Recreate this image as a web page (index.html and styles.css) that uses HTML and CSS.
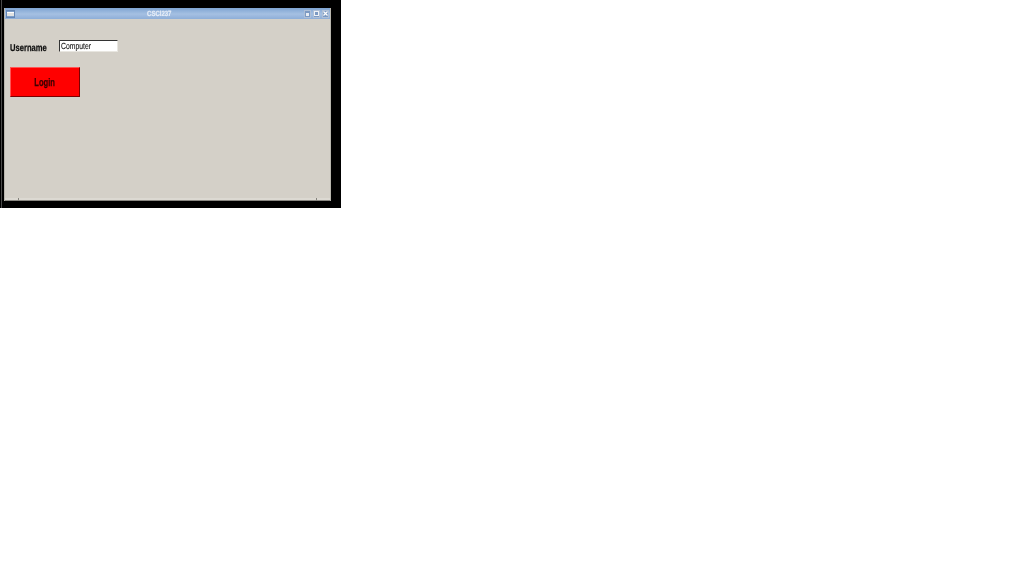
FILE: index.html
```html
<!DOCTYPE html>
<html lang="en">
<head>
<meta charset="utf-8">
<title>CSCI237</title>
<link rel="stylesheet" href="styles.css">
</head>
<body>
<div class="screen">
  <div class="window">
    <div class="titlebar">
      <button class="menu-btn" aria-label="Window menu"><span class="menu-glyph"></span></button>
      <span class="title">CSCI237</span>
      <div class="controls">
        <button class="ctl" aria-label="Minimize"><span class="glyph-min"></span></button>
        <button class="ctl" aria-label="Maximize"><span class="glyph-max"></span></button>
        <button class="ctl" aria-label="Close">
          <svg class="glyph-close" viewBox="0 0 5 5"><path d="M0.5 0.5L4.5 4.5M4.5 0.5L0.5 4.5" stroke="#fff" stroke-width="1.2" fill="none"/></svg>
        </button>
      </div>
    </div>
    <div class="content">
      <div class="form-row">
        <span class="label"><span class="squeeze squeeze-bold">Username</span></span>
        <div class="field" role="textbox"><span class="squeeze">Computer</span></div>
      </div>
      <button class="login"><span class="squeeze squeeze-bold squeeze-center">Login</span></button>
    </div>
    <div class="resize">
      <span class="grip"></span>
      <span class="grip"></span>
    </div>
  </div>
</div>
</body>
</html>
```
FILE: styles.css
```css
* { box-sizing: border-box; }
html, body { margin: 0; padding: 0; background: #fff; }
body { font-family: "Liberation Sans", Arial, sans-serif; text-rendering: geometricPrecision; }

.screen {
  width: 341px;
  height: 208px;
  background: #000;
  padding: 8px 10px 7px 4px;
  box-shadow: inset 1px 0 0 #000, inset 2px 0 0 #4a4a4a;
  filter: blur(0.35px);
}
.window {
  width: 327px;
  height: 193px;
  display: flex;
  flex-direction: column;
  background: #d4d0c8;
  border-left: 1px solid #b9b6ae;
  border-right: 1px solid #b9b6ae;
}
.titlebar {
  height: 11px;
  flex: none;
  display: flex;
  align-items: center;
  justify-content: space-between;
  padding: 0 1px;
  background: linear-gradient(#7fa5d3, #a5c0e2 55%, #8eaed8);
}
.menu-btn, .ctl {
  padding: 0;
  border: 0;
  display: flex;
  align-items: center;
  justify-content: center;
}
.menu-btn {
  width: 9px;
  height: 8px;
  background: #7d9ec9;
  border: 1px solid #6486b5;
}
.menu-glyph {
  display: block;
  width: 7px;
  height: 4px;
  background: #e0e2e2;
  border-top: 1px solid #fff;
}
.title {
  font-size: 7.5px;
  font-weight: 700;
  line-height: 11px;
  color: #e6edf7;
  margin-left: -1px;
  transform: scaleX(0.8);
  -webkit-text-stroke: 0.2px #e6edf7;
}
.controls { display: flex; gap: 2px; }
.ctl {
  width: 7px;
  height: 8px;
  background: #7c9ac3;
  border: 1px solid #aebfd6;
}
.glyph-min { display: block; width: 3px; height: 3px; margin-top: 2px; background: #e8edf3; }
.glyph-max { display: block; width: 5px; height: 5px; border: 1px solid #eef2f6; }
.glyph-close { display: block; width: 5px; height: 5px; }

.squeeze {
  display: inline-block;
  white-space: nowrap;
  transform: scaleX(0.76);
  transform-origin: left center;
}
.squeeze-bold { transform: scaleX(0.76); }
.squeeze-center { transform-origin: center; }

.content {
  flex: 1;
  padding: 21px 0 0 5px;
  display: flex;
  flex-direction: column;
}
.form-row {
  display: flex;
  align-items: flex-start;
  gap: 11px;
  height: 14px;
}
.label {
  width: 38px;
  font-size: 10px;
  font-weight: 700;
  line-height: 14px;
  color: #111;
  padding-top: 2px;
  -webkit-text-stroke: 0.25px #111;
}
.field {
  width: 59px;
  height: 12px;
  padding-left: 1px;
  font-size: 9px;
  line-height: 10px;
  color: #111;
  background: #fff;
  border: 1px solid;
  border-color: #333 #e8e6e0 #e8e6e0 #333;
  -webkit-text-stroke: 0.1px #111;
}
.login {
  margin-top: 13px;
  width: 70px;
  height: 30px;
  padding: 0;
  font-family: inherit;
  font-size: 10px;
  font-weight: 700;
  color: #3a0000;
  background: #ff0000;
  border: 1px solid;
  border-color: #f55 #7a0000 #7a0000 #f55;
  border-radius: 0;
  -webkit-text-stroke: 0.25px #3a0000;
}
.resize {
  height: 3px;
  flex: none;
  display: flex;
  justify-content: space-between;
  padding: 0 13px;
  background: #dcd9d2;
  border-bottom: 1px solid #8a8882;
}
.grip { display: block; width: 1px; height: 3px; background: #85837d; }
```
